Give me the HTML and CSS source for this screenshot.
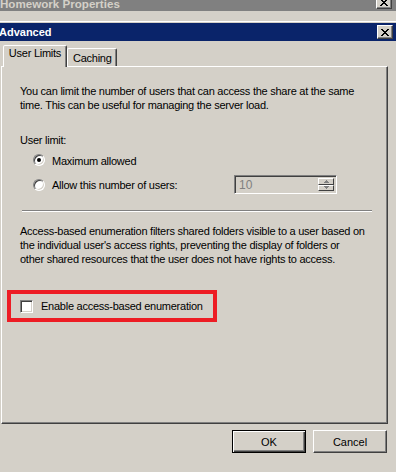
FILE: index.html
```html
<!DOCTYPE html>
<html>
<head>
<meta charset="utf-8">
<link rel="stylesheet" href="styles.css">
</head>
<body>
<div class="parent-bar">
  <span class="parent-title">Homework Properties</span>
  <span class="cap-btn parent-btn"><svg width="8" height="7" viewBox="0 0 8 7" shape-rendering="crispEdges"><path d="M0 0h2v1h-2zM6 0h2v1h-2zM1 1h2v1h-2zM5 1h2v1h-2zM2 2h4v1h-4zM3 3h2v1h-2zM2 4h4v1h-4zM1 5h2v1h-2zM5 5h2v1h-2zM0 6h2v1h-2zM6 6h2v1h-2z" fill="#000"/></svg></span>
</div>
<div class="gap"></div>
<div class="dialog">
  <div class="caption">
    <span class="caption-title">Advanced</span>
    <span class="cap-btn"><svg width="8" height="7" viewBox="0 0 8 7" shape-rendering="crispEdges"><path d="M0 0h2v1h-2zM6 0h2v1h-2zM1 1h2v1h-2zM5 1h2v1h-2zM2 2h4v1h-4zM3 3h2v1h-2zM2 4h4v1h-4zM1 5h2v1h-2zM5 5h2v1h-2zM0 6h2v1h-2zM6 6h2v1h-2z" fill="#000"/></svg></span>
  </div>
  <div class="client">
    <div class="tabs">
      <div class="tab active">User Limits</div>
      <div class="tab">Caching</div>
    </div>
    <div class="panel">
      <p class="text p1">You can limit the number of users that can access the share at the same<br>time. This can be useful for managing the server load.</p>
      <p class="text label">User limit:</p>
      <div class="radio-row">
        <span class="radio checked"></span>
        <span class="radio-label">Maximum allowed</span>
      </div>
      <div class="radio-row row2">
        <span class="radio"></span>
        <span class="radio-label wide">Allow this number of users:</span>
        <div class="spin">
          <span class="spin-value">10</span>
          <div class="spin-btns">
            <span class="spin-btn"><svg width="5" height="3" viewBox="0 0 5 3" shape-rendering="crispEdges"><path d="M2 0h1v1h1v1h1v1h-5v-1h1v-1h1z" fill="#808080"/></svg></span>
            <span class="spin-btn"><svg width="5" height="3" viewBox="0 0 5 3" shape-rendering="crispEdges"><path d="M0 0h5v1h-1v1h-1v1h-1v-1h-1v-1h-1z" fill="#808080"/></svg></span>
          </div>
        </div>
      </div>
      <div class="separator"></div>
      <p class="text p2">Access-based enumeration filters shared folders visible to a user based on<br>the individual user's access rights, preventing the display of folders or<br>other shared resources that the user does not have rights to access.</p>
      <div class="highlight">
        <span class="checkbox"></span>
        <span class="check-label">Enable access-based enumeration</span>
      </div>
    </div>
    <div class="buttons">
      <div class="btn default">OK</div>
      <div class="btn">Cancel</div>
    </div>
  </div>
</div>
</body>
</html>
```

FILE: styles.css
```css
* { box-sizing: border-box; }
html, body { margin: 0; padding: 0; }
body {
  width: 396px;
  height: 472px;
  overflow: hidden;
  background: #d4d0c8;
  font-family: "Liberation Sans", Arial, sans-serif;
  font-size: 11px;
  color: #000;
}

.parent-bar {
  height: 11px;
  background: #808080;
  display: flex;
  justify-content: space-between;
  align-items: flex-start;
  overflow: hidden;
}
.parent-title {
  font-weight: bold;
  font-size: 11.6px;
  line-height: 11px;
  color: #d4d0c8;
  margin-top: -2px;
  white-space: nowrap;
}
.gap { height: 10px; }

.dialog {
  border-top: 1px solid #fff;
  padding-top: 1px;
}
.caption {
  height: 18px;
  background: #0a246a;
  display: flex;
  align-items: center;
  justify-content: space-between;
}
.caption-title {
  font-weight: bold;
  color: #fff;
  margin-left: -1px;
  line-height: 18px;
}
.cap-btn {
  width: 16px;
  height: 14px;
  background: #d4d0c8;
  border: 1px solid;
  border-color: #fff #404040 #404040 #fff;
  box-shadow: inset -1px -1px #808080;
  display: flex;
  align-items: center;
  justify-content: center;
  margin-right: 3px;
  flex: none;
}
.cap-btn svg { display: block; }
.parent-btn {
  margin-top: -5px;
  margin-right: 4px;
}

.client { padding-top: 4px; letter-spacing: -0.25px; }
.tabs {
  display: flex;
  align-items: flex-end;
  padding-left: 3px;
  height: 21px;
}
.tab {
  height: 18px;
  padding: 0 4px 0 5px;
  line-height: 19px;
  border: 1px solid;
  border-bottom: none;
  border-color: #fff #404040 transparent #fff;
  box-shadow: inset -1px 0 #808080;
  border-radius: 2px 2px 0 0;
  white-space: nowrap;
}
.tab.active {
  height: 22px;
  width: 64px;
  padding: 0;
  text-align: center;
  line-height: 15px;
  background: #d4d0c8;
  margin-bottom: -1px;
  position: relative;
  z-index: 1;
}

.panel {
  margin-left: 1px;
  width: 387px;
  height: 358px;
  border: 1px solid;
  border-color: #fff #404040 #404040 #fff;
  box-shadow: inset -1px -1px #808080;
  padding: 0 0 0 18px;
  display: flex;
  flex-direction: column;
}
.text { margin: 0; line-height: 14px; white-space: nowrap; }
.p1 { margin-top: 17px; }
.label { margin-top: 21px; }

.radio-row {
  display: flex;
  align-items: flex-start;
  margin-top: 7px;
  padding-left: 13px;
  line-height: 14px;
}
.radio {
  width: 12px;
  height: 12px;
  border-radius: 50%;
  background: #fff;
  border: 1px solid;
  border-color: #808080 #fff #fff #808080;
  box-shadow: inset 1px 1px #404040, inset -1px -1px #d4d0c8;
  flex: none;
  display: flex;
  align-items: center;
  justify-content: center;
}
.radio.checked::after {
  content: "";
  width: 4px;
  height: 4px;
  border-radius: 50%;
  background: #000;
}
.radio-label { margin-left: 7px; }
.row2 { align-items: center; height: 19px; }
.radio-label.wide { width: 182px; }
.spin {
  width: 103px;
  height: 19px;
  border: 1px solid;
  border-color: #808080 #fff #fff #808080;
  box-shadow: inset 1px 1px #404040, inset -1px -1px #d4d0c8;
  display: flex;
  justify-content: space-between;
  padding: 2px 2px 2px 4px;
}
.spin-value { color: #808080; font-size: 12px; line-height: 15px; letter-spacing: 0; }
.spin-btns { display: flex; flex-direction: column; width: 16px; }
.spin-btn {
  height: 7.5px;
  flex: 1;
  background: #d4d0c8;
  border: 1px solid;
  border-color: #fff #404040 #404040 #fff;
  display: flex;
  align-items: center;
  justify-content: center;
}
.spin-btn svg { display: block; }

.separator {
  margin-top: 16px;
  width: 350px;
  margin-left: 2px;
  height: 2px;
  border-top: 1px solid #808080;
  border-bottom: 1px solid #fff;
}
.p2 { margin-top: 12px; }

.highlight {
  margin-top: 24px;
  margin-left: -13px;
  width: 210px;
  height: 32px;
  border: 4px solid #ed1c24;
  display: flex;
  align-items: center;
  padding-left: 9px;
}
.checkbox {
  width: 13px;
  height: 13px;
  background: #fff;
  border: 1px solid;
  border-color: #808080 #fff #fff #808080;
  box-shadow: inset 1px 1px #404040, inset -1px -1px #d4d0c8;
  flex: none;
}
.check-label { margin-left: 8px; white-space: nowrap; }

.buttons {
  display: flex;
  justify-content: flex-end;
  gap: 7px;
  margin-top: 6px;
  padding-right: 9px;
  letter-spacing: 0;
}
.btn {
  width: 74px;
  height: 23px;
  border: 1px solid;
  border-color: #fff #404040 #404040 #fff;
  box-shadow: inset -1px -1px #808080;
  display: flex;
  align-items: center;
  justify-content: center;
}
.btn.default {
  border-color: #000;
  box-shadow: inset 1px 1px #fff, inset -1px -1px #404040, inset -2px -2px #808080;
}
```
